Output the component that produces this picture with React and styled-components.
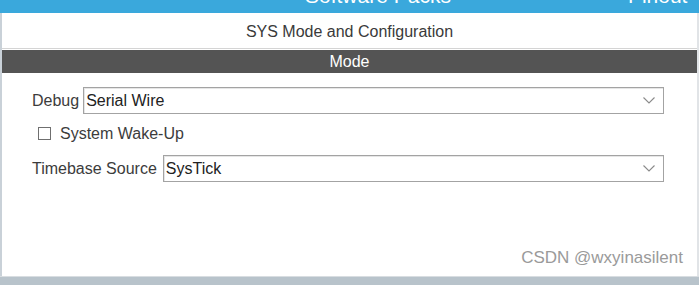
import React from 'react';
import styled, { createGlobalStyle } from 'styled-components';

const GlobalStyle = createGlobalStyle`
  html, body {
    margin: 0;
    padding: 0;
    background: #ffffff;
  }
  body {
    font-family: "Liberation Sans", Arial, sans-serif;
  }
`;

const Page = styled.div`
  width: 699px;
  height: 285px;
  display: flex;
  flex-direction: column;
  overflow: hidden;
`;

const TopBar = styled.div`
  height: 13px;
  flex: none;
  background: #3aa8dc;
  overflow: hidden;
  display: flex;
  align-items: flex-end;
`;

const TabLabel = styled.div`
  display: flex;
  align-items: center;
  gap: 14px;
  color: #ffffff;
  font-size: 21px;
  line-height: 20px;
  margin-bottom: 7px;
  margin-left: ${({ $left }) => $left}px;
  white-space: nowrap;
`;

const TabArrow = styled.span`
  font-size: 12px;
  opacity: 0.7;
`;

const Panel = styled.div`
  flex: 1;
  position: relative;
  display: flex;
  flex-direction: column;
  border-left: 2px solid #c9d1d8;
  border-right: 2px solid #e1e4e7;
  background: #ffffff;
`;

const Title = styled.div`
  height: 36px;
  box-sizing: border-box;
  padding-top: 3px;
  display: flex;
  align-items: center;
  justify-content: center;
  font-size: 16px;
  color: #3a3a3a;
  border-bottom: 1px solid #d4d4d4;
`;

const SectionBar = styled.div`
  height: 23px;
  margin-top: 1px;
  background: #545454;
  color: #ffffff;
  font-size: 16px;
  display: flex;
  align-items: center;
  justify-content: center;
`;

const Form = styled.div`
  display: flex;
  flex-direction: column;
  padding: 14px 33px 0 30px;
`;

const Row = styled.div`
  display: flex;
  align-items: center;
  height: ${({ $h }) => $h || 27}px;
  margin-top: ${({ $mt }) => $mt || 0}px;
  padding-left: ${({ $pl }) => $pl || 0}px;
`;

const Label = styled.span`
  font-size: 16px;
  color: #3c3c3c;
  margin-right: ${({ $gap }) => $gap || 4}px;
  white-space: nowrap;
`;

const Select = styled.div`
  flex: 1;
  height: 27px;
  box-sizing: border-box;
  border: 1px solid #a3a3a3;
  box-shadow: inset 1px 1px 0 #e6e6e6;
  display: flex;
  align-items: center;
  justify-content: space-between;
  padding: 0 8px 0 2px;
  font-size: 16px;
  color: #222222;
`;

const Box = styled.span`
  width: 13px;
  height: 13px;
  box-sizing: border-box;
  border: 1px solid #6f6f6f;
  background: #ffffff;
  margin-right: 9px;
`;

const CheckText = styled.span`
  font-size: 16px;
  color: #3c3c3c;
`;

const Watermark = styled.div`
  position: absolute;
  right: 14px;
  bottom: 8px;
  font-size: 17px;
  color: #9a9a9a;
`;

const BottomBar = styled.div`
  height: 8px;
  flex: none;
  background: #b8c3cb;
  border-top: 1px solid #d8dde1;
`;

const Chevron = () => (
  <svg width="12" height="7" viewBox="0 0 12 7">
    <path d="M0.5 0.5 L6 6 L11.5 0.5" fill="none" stroke="#8a8a8a" strokeWidth="1.1" />
  </svg>
);

const Dropdown = ({ value }) => (
  <Select>
    <span>{value}</span>
    <Chevron />
  </Select>
);

export default function App() {
  return (
    <Page>
      <GlobalStyle />
      <TopBar>
        <TabLabel $left={281}>
          <TabArrow>⌄</TabArrow>
          <span>Software Packs</span>
        </TabLabel>
        <TabLabel $left={153}>
          <TabArrow>⌄</TabArrow>
          <span>Pinout</span>
        </TabLabel>
      </TopBar>
      <Panel>
        <Title>SYS Mode and Configuration</Title>
        <SectionBar>Mode</SectionBar>
        <Form>
          <Row>
            <Label>Debug</Label>
            <Dropdown value="Serial Wire" />
          </Row>
          <Row $mt={6} $pl={6}>
            <Box />
            <CheckText>System Wake-Up</CheckText>
          </Row>
          <Row $mt={8}>
            <Label $gap={6}>Timebase Source</Label>
            <Dropdown value="SysTick" />
          </Row>
        </Form>
        <Watermark>CSDN @wxyinasilent</Watermark>
      </Panel>
      <BottomBar />
    </Page>
  );
}
